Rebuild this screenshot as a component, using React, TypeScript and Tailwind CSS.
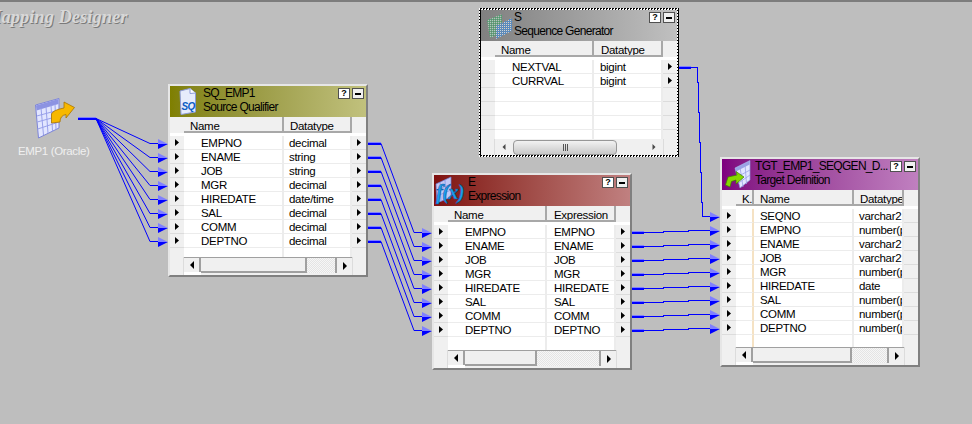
import React from 'react';

const WIRE = '#0000ff';
const rowY = (i: number, base: number) => base + i * 14;

function Caret({ dir = 'right', small = false }: { dir?: 'left' | 'right'; small?: boolean }) {
    const d = dir === 'right' ? 'M1 0 L5 4 L1 8 Z' : 'M5 0 L1 4 L5 8 Z';
    return (
        <svg width="6" height="8" viewBox="0 0 6 8" className={small ? 'scale-75' : ''}>
            <path d={d} fill="#000" />
        </svg>
    );
}

function Gutter({ arrow, className = '' }: { arrow?: boolean; className?: string }) {
    return (
        <div className={`w-[14px] shrink-0 bg-[#f0f0f0] border-b border-[#dcdcdc] flex items-center justify-center ${className}`}>
            {arrow && <svg width="4" height="7" viewBox="0 0 4 7"><path d="M0 0 L4 3.5 L0 7 Z" fill="#000" /></svg>}
        </div>
    );
}

function TitleButtons() {
    return (
        <div className="flex gap-[2px] mt-[2px] ml-auto shrink-0">
            <div className="w-[12px] h-[11px] bg-white border border-[#505050] text-[9px] leading-[9px] text-center font-bold text-black tracking-normal">?</div>
            <div className="w-[12px] h-[11px] bg-[#f0f0f0] border border-[#505050] flex items-center justify-center">
                <div className="w-[6px] h-[2px] bg-black" />
            </div>
        </div>
    );
}

function FlatScroll({ thumb, rest }: { thumb: string; rest: string }) {
    return (
        <div className="flex-1 flex h-[18px] bg-[#f0f0f0] border-t border-[#a0a0a0]">
            <div className="w-[17px] shrink-0 flex flex-col">
                <div className="flex-1 border-r-2 border-[#a0a0a0] flex items-center justify-center"><Caret dir="left" /></div>
                <div className="h-[3px] bg-white" />
            </div>
            <div className={`${thumb} shrink-0 border-r-2 border-b-2 border-[#a0a0a0] h-[15px]`} />
            <div className={`${rest} shrink-0 h-[15px] bg-[repeating-conic-gradient(#f6f6f6_0_25%,#e4e4e4_0_50%)] bg-[length:2px_2px]`} />
            <div className="flex-1 h-[15px] border-l-2 border-[#a0a0a0] flex items-center justify-center"><Caret /></div>
        </div>
    );
}

function ThemedScroll() {
    return (
        <div className="flex-1 flex items-center h-[16px] bg-[#f0f0f0]">
            <div className="w-[18px] shrink-0 flex justify-center opacity-70"><Caret dir="left" small /></div>
            <div className="w-[104px] h-[15px] shrink-0 rounded-sm border border-[#979797] bg-gradient-to-b from-[#f2f2f2] to-[#c8c8c8] flex items-center justify-center gap-[1px]">
                <div className="w-[1px] h-[7px] bg-[#555]" />
                <div className="w-[1px] h-[7px] bg-[#555]" />
                <div className="w-[1px] h-[7px] bg-[#555]" />
            </div>
            <div className="flex-1 flex justify-end pr-[6px] opacity-70"><Caret small /></div>
        </div>
    );
}

function SourceIcon() {
    return (
        <svg width="40" height="41" viewBox="0 0 40 41">
            <path d="M0.5 7 L24 0.5 L24 30 L3.5 40 Z" fill="#e2e6ff" stroke="#7d85d8" />
            <path d="M1 7.5 L23.5 1 L23.5 6 L1.5 12.5 Z" fill="#8c93e2" />
            <path d="M6 10 L8.5 37 M11 9 L13 35 M16 7 L17.5 33 M20 6 L21 31 M1.8 18 L24 12 M2.2 24 L24 18 M2.7 31 L24 24" stroke="#98a0ea" fill="none" />
            <path d="M16.5 25 L16.5 16 Q18 12 29 10 L29 4 L39.5 9.5 L31 20 L31 16.5 Q25 17.5 25 24 Z" fill="#f7b800" stroke="#a87400" strokeWidth="0.8" />
        </svg>
    );
}

function SqIcon() {
    return (
        <svg width="18" height="27" viewBox="0 0 18 27">
            <path d="M1 3 L11 0.5 L16.5 5 L16.5 24 L2 26.5 Z" fill="#e6ecfb" stroke="#8c9bd8" />
            <path d="M11 0.5 L11 5.5 L16.5 5" fill="#fff" stroke="#8c9bd8" />
            <text x="2.5" y="22" fontSize="10" fontWeight="700" fontStyle="italic" fill="#0a5cc4" fontFamily="Liberation Sans, sans-serif" textLength="13" lengthAdjust="spacingAndGlyphs">SQ</text>
        </svg>
    );
}

function SeqIcon() {
    return (
        <svg width="27" height="26" viewBox="0 0 27 26">
            <defs>
                <pattern id="dotG" width="2" height="2" patternUnits="userSpaceOnUse">
                    <rect width="1" height="1" fill="#39b06a" />
                    <rect x="1" y="1" width="1" height="1" fill="#9fe0b8" />
                </pattern>
                <pattern id="dotB" width="2" height="2" patternUnits="userSpaceOnUse">
                    <rect width="1" height="1" fill="#2f8cf0" />
                    <rect x="1" y="1" width="1" height="1" fill="#a8d4ff" />
                </pattern>
            </defs>
            <path d="M2 7 L17 1 L17 20 L5 25 Z" fill="url(#dotG)" />
            <path d="M11 13 L27 5 L27 18 L11 26 Z" fill="url(#dotB)" />
        </svg>
    );
}

function ExprIcon() {
    return (
        <svg width="32" height="31" viewBox="0 0 32 31">
            <path d="M2 9 L17 2 L17 22 L3 28 Z" fill="#c2c8f5" stroke="#6f83d8" strokeWidth="0.7" />
            <path d="M6 7 L7 26 M11 5 L12 24 M3 15 L17 9 M3 21 L17 15" stroke="#6f83d8" strokeWidth="0.6" fill="none" />
            <text x="2" y="24" fontSize="20" fontWeight="700" fontStyle="italic" fill="#1aa0ee" fontFamily="Liberation Serif, serif" stroke="#0a4e9a" strokeWidth="0.5" textLength="28" lengthAdjust="spacingAndGlyphs">f(x)</text>
        </svg>
    );
}

function TargetIcon() {
    return (
        <svg width="26" height="29" viewBox="0 0 26 29">
            <path d="M10 8 L25 0.5 L25 20 L15 28 Z" fill="#e2e6ff" stroke="#8d95d8" strokeWidth="0.7" />
            <path d="M10.5 8 L24.7 1 L24.7 4.5 L11 11.5 Z" fill="#9aa2e4" />
            <path d="M15 7 L18 27 M20 4 L21.5 24 M12 17 L25 10 M13.5 23 L25 15" stroke="#9aa2e4" strokeWidth="0.8" fill="none" />
            <path d="M0.5 25 L3 17 L12 15 L11 11.5 L19 17 L11 24 L11 20 L6.5 21.5 L5 27 Z" fill="#86d800" stroke="#3f7a00" strokeWidth="0.7" />
        </svg>
    );
}

function Node(props: {
    pos: string;
    frame?: string;
    titleBg: string;
    icon: React.ReactNode;
    iconBox: string;
    name: string;
    kind: string;
    cols: { label: string; width: string; indent: string; head: string; cells: string[] }[];
    leftArrows: number;
    rightArrows: number;
    fill: number;
    scroll: React.ReactNode;
    leading?: string;
}) {
    const { pos, frame, titleBg, icon, iconBox, name, kind, cols, leftArrows, rightArrows, fill, scroll, leading } = props;
    const total = cols[0].cells.length + fill;
    const rows = Array.from({ length: total }, (_, i) => i);
    return (
        <div className={`absolute ${pos} ${frame ?? 'border-2 border-t-[#e6e6e6] border-l-[#e6e6e6] border-r-[#808080] border-b-[#808080]'}`}>
            <div className="h-full bg-[#f0f0f0] flex flex-col overflow-hidden">
                <div className={`h-[31px] shrink-0 flex pl-1 pr-[2px] ${titleBg} text-black leading-[14px] text-[12px] tracking-[-0.7px]`}>
                    <div className={`${iconBox} shrink-0 flex items-center`}>{icon}</div>
                    <div className="whitespace-nowrap">
                        <div>{name}</div>
                        <div>{kind}</div>
                    </div>
                    <TitleButtons />
                </div>
                <div className="h-[16px] shrink-0 flex text-[11.5px] tracking-[-0.3px] leading-[18px]">
                    <div className="w-[14px] shrink-0" />
                    {leading && <div className={`${leading} shrink-0 border-b-2 border-r-2 border-[#a8a8a8] pl-[6px] overflow-hidden`}>K.</div>}
                    {cols.map((c) => (
                        <div key={c.label} className={`${c.width} ${c.head} shrink-0 border-b-2 border-r-2 border-[#a8a8a8] overflow-hidden whitespace-nowrap last:border-r-0`}>
                            {c.label}
                        </div>
                    ))}
                    <div className="flex-1" />
                </div>
                <div className="flex-1 flex flex-col bg-white pt-[3px] overflow-hidden">
                    {rows.map((i) => (
                        <div key={i} className="h-[14px] shrink-0 flex text-[11.5px] tracking-[-0.3px] leading-[14px]">
                            <Gutter arrow={i < leftArrows} />
                            {leading && <div className={`${leading} shrink-0 border-b border-[#ececec] border-r-2 border-r-[#f5e2c4]`} />}
                            {cols.map((c) => (
                                <div key={c.label} className={`${c.width} shrink-0 border-b border-r-2 border-[#ececec] last:border-r-0 overflow-hidden whitespace-nowrap ${c.indent}`}>
                                    {c.cells[i] ?? ''}
                                </div>
                            ))}
                            <Gutter arrow={i < rightArrows} className="ml-auto" />
                        </div>
                    ))}
                </div>
                <div className="shrink-0 flex bg-[#f0f0f0]">
                    <div className="w-[14px] shrink-0 border-r border-[#dcdcdc]" />
                    {scroll}
                    <div className="w-[14px] shrink-0 border-l border-[#dcdcdc]" />
                </div>
            </div>
        </div>
    );
}

function Arrow({ x, y }: { x: number; y: number }) {
    return (
        <g>
            <polygon points={`${x},${y - 5} ${x + 10},${y} ${x},${y}`} fill="#8080ff" />
            <polygon points={`${x},${y} ${x + 10},${y} ${x},${y + 5}`} fill={WIRE} />
        </g>
    );
}

function Stub({ x, y, w }: { x: number; y: number; w: number }) {
    return (
        <g>
            <rect x={x} y={y - 1} width={w} height={1} fill="#8080ff" />
            <rect x={x} y={y} width={w} height={2} fill={WIRE} />
        </g>
    );
}

function Wires() {
    const eight = [0, 1, 2, 3, 4, 5, 6, 7];
    return (
        <svg width="972" height="424" viewBox="0 0 972 424" className="absolute inset-0" fill="none">
            <Stub x={78} y={118} w={18} />
            {eight.map((i) => {
                const y = rowY(i, 143);
                return (
                    <g key={`a${i}`}>
                        <path d={`M96 118.5 L150 ${y + 0.5} H160`} stroke={WIRE} />
                        <Arrow x={158} y={y + 1} />
                    </g>
                );
            })}
            {eight.map((i) => {
                const y1 = rowY(i, 143);
                const y2 = rowY(i, 232);
                return (
                    <g key={`b${i}`}>
                        <Stub x={368} y={y1} w={13} />
                        <path d={`M381 ${y1 + 0.5} L414 ${y2 + 0.5} H424`} stroke={WIRE} />
                        <Arrow x={422} y={y2 + 1} />
                    </g>
                );
            })}
            {eight.map((i) => {
                const y = rowY(i, 232);
                return (
                    <g key={`c${i}`}>
                        <Stub x={632} y={y} w={12} />
                        <path d={`M644 ${y + 0.5} H663 V${y - 0.5} H688 V${y - 1.5} H712`} stroke={WIRE} shapeRendering="crispEdges" />
                        <Arrow x={710} y={y - 1} />
                    </g>
                );
            })}
            <Stub x={679} y={67} w={12} />
            <path d="M691 67.5 H697.5 V82 H698.5 V112 H699.5 V142 H700.5 V172 H701.5 V202 H702.5 V216.5 H712" stroke={WIRE} shapeRendering="crispEdges" />
            <Arrow x={710} y={217} />
        </svg>
    );
}

const names = ['EMPNO', 'ENAME', 'JOB', 'MGR', 'HIREDATE', 'SAL', 'COMM', 'DEPTNO'];

export default function App() {
    return (
        <div className="relative w-[972px] h-[424px] overflow-hidden bg-[#bebebe] font-['Liberation_Sans',Arial,sans-serif] text-black border-t-2 border-[#7d7d7d]">
            <div className="absolute -left-[15px] top-[2px] font-['Liberation_Serif',serif] italic font-bold text-[18.5px] text-[#d8d8d8] [text-shadow:1px_1px_0_#7a7a7a] whitespace-nowrap">
                Mapping Designer
            </div>

            <div className="absolute inset-x-0 -top-[2px] h-[424px]">
                <Wires />

                <div className="absolute left-[18px] top-[98px] w-[71px] flex flex-col">
                    <div className="h-[41px] ml-[17px]"><SourceIcon /></div>
                    <div className="text-[11.5px] tracking-[-0.35px] leading-[13px] text-[#f0f0f0] mt-[6px] whitespace-nowrap text-center">EMP1 (Oracle)</div>
                </div>

                <Node
                    pos="left-[168px] top-[84px] w-[200px] h-[193px]"
                    titleBg="bg-gradient-to-r from-[#7f7f00] to-[#c1c17d]"
                    icon={<SqIcon />}
                    iconBox="w-[29px] pl-[5px]"
                    name="SQ_EMP1"
                    kind="Source Qualifier"
                    cols={[
                        { label: 'Name', width: 'w-[100px]', head: 'pl-[6px]', indent: 'pl-[17px]', cells: names },
                        {
                            label: 'Datatype',
                            width: 'w-[68px]',
                            head: 'pl-[6px]',
                            indent: 'pl-[5px]',
                            cells: ['decimal', 'string', 'string', 'decimal', 'date/time', 'decimal', 'decimal', 'decimal'],
                        },
                    ]}
                    leftArrows={8}
                    rightArrows={8}
                    fill={1}
                    scroll={<FlatScroll thumb="w-[106px]" rest="w-[28px]" />}
                />

                <Node
                    pos="left-[479px] top-[8px] w-[200px] h-[149px]"
                    frame="p-[2px] bg-[repeating-conic-gradient(#000_0_25%,#fff_0_50%)] bg-[length:3px_3px]"
                    titleBg="bg-gradient-to-r from-[#808080] to-[#c0c0c0]"
                    icon={<SeqIcon />}
                    iconBox="w-[29px]"
                    name="S"
                    kind="Sequence Generator"
                    cols={[
                        { label: 'Name', width: 'w-[99px]', head: 'pl-[6px]', indent: 'pl-[17px]', cells: ['NEXTVAL', 'CURRVAL'] },
                        { label: 'Datatype', width: 'w-[69px]', head: 'pl-[7px]', indent: 'pl-[6px]', cells: ['bigint', 'bigint'] },
                    ]}
                    leftArrows={0}
                    rightArrows={2}
                    fill={4}
                    scroll={<ThemedScroll />}
                />

                <Node
                    pos="left-[432px] top-[173px] w-[200px] h-[197px]"
                    titleBg="bg-gradient-to-r from-[#7f0f0f] to-[#c08080]"
                    icon={<div className="-ml-[4px]"><ExprIcon /></div>}
                    iconBox="w-[30px]"
                    name="E"
                    kind="Expression"
                    cols={[
                        { label: 'Name', width: 'w-[99px]', head: 'pl-[6px]', indent: 'pl-[17px]', cells: names },
                        { label: 'Expression', width: 'w-[69px]', head: 'pl-[7px]', indent: 'pl-[7px]', cells: names },
                    ]}
                    leftArrows={8}
                    rightArrows={8}
                    fill={1}
                    scroll={<FlatScroll thumb="w-[72px]" rest="w-[62px]" />}
                />

                <Node
                    pos="left-[720px] top-[157px] w-[200px] h-[210px]"
                    titleBg="bg-gradient-to-r from-[#7f007f] to-[#c080c0]"
                    icon={<div className="-ml-[1px]"><TargetIcon /></div>}
                    iconBox="w-[29px]"
                    name="TGT_EMP1_SEQGEN_D..."
                    kind="Target Definition"
                    leading="w-[18px]"
                    cols={[
                        { label: 'Name', width: 'w-[100px]', head: 'pl-[6px]', indent: 'pl-[6px]', cells: ['SEQNO', ...names] },
                        {
                            label: 'Datatype',
                            width: 'w-[50px]',
                            head: 'pl-[6px]',
                            indent: 'pl-[5px]',
                            cells: ['varchar2', 'number(p', 'varchar2', 'varchar2', 'number(p', 'date', 'number(p', 'number(p', 'number(p'],
                        },
                    ]}
                    leftArrows={9}
                    rightArrows={0}
                    fill={1}
                    scroll={<FlatScroll thumb="w-[99px]" rest="w-[35px]" />}
                />
            </div>
        </div>
    );
}
